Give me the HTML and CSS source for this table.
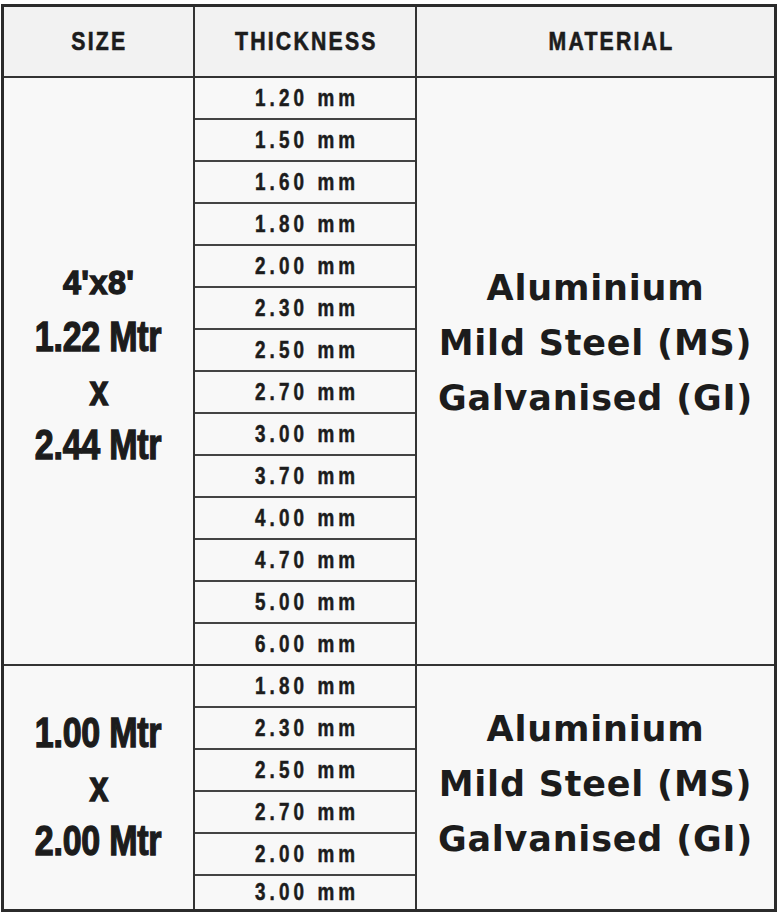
FILE: index.html
```html
<!DOCTYPE html>
<html lang="en">
<head>
<meta charset="utf-8">
<title>Sheet Sizes</title>
<link rel="stylesheet" href="styles.css">
</head>
<body>
<div class="sheet">
  <div class="head">
    <div class="h h-size"><span class="ht">SIZE</span></div>
    <div class="h h-thick"><span class="ht">THICKNESS</span></div>
    <div class="h h-mat"><span class="ht">MATERIAL</span></div>
  </div>
  <div class="section s1">
    <div class="size">
      <div class="sz sz-small">4'x8'</div>
      <div class="sz">1.22 Mtr</div>
      <div class="sz">x</div>
      <div class="sz">2.44 Mtr</div>
    </div>
    <div class="thick">
      <div class="row"><span class="val">1.20 mm</span></div>
      <div class="row"><span class="val">1.50 mm</span></div>
      <div class="row"><span class="val">1.60 mm</span></div>
      <div class="row"><span class="val">1.80 mm</span></div>
      <div class="row"><span class="val">2.00 mm</span></div>
      <div class="row"><span class="val">2.30 mm</span></div>
      <div class="row"><span class="val">2.50 mm</span></div>
      <div class="row"><span class="val">2.70 mm</span></div>
      <div class="row"><span class="val">3.00 mm</span></div>
      <div class="row"><span class="val">3.70 mm</span></div>
      <div class="row"><span class="val">4.00 mm</span></div>
      <div class="row"><span class="val">4.70 mm</span></div>
      <div class="row"><span class="val">5.00 mm</span></div>
      <div class="row"><span class="val">6.00 mm</span></div>
    </div>
    <div class="mat">
      <div class="m">Aluminium</div>
      <div class="m">Mild Steel (MS)</div>
      <div class="m">Galvanised (GI)</div>
    </div>
  </div>
  <div class="section s2">
    <div class="size">
      <div class="sz">1.00 Mtr</div>
      <div class="sz">x</div>
      <div class="sz">2.00 Mtr</div>
    </div>
    <div class="thick">
      <div class="row"><span class="val">1.80 mm</span></div>
      <div class="row"><span class="val">2.30 mm</span></div>
      <div class="row"><span class="val">2.50 mm</span></div>
      <div class="row"><span class="val">2.70 mm</span></div>
      <div class="row"><span class="val">2.00 mm</span></div>
      <div class="row"><span class="val">3.00 mm</span></div>
    </div>
    <div class="mat">
      <div class="m">Aluminium</div>
      <div class="m">Mild Steel (MS)</div>
      <div class="m">Galvanised (GI)</div>
    </div>
  </div>
</div>
</body>
</html>
```
FILE: styles.css
```css
html, body {
  margin: 0;
  padding: 0;
  background: #ffffff;
}

.sheet {
  margin: 4px 0 0 1px;
  width: 776px;
  box-sizing: border-box;
  border: 3px solid #2b2b2b;
  background: #f8f8f8;
  color: #1c1c1c;
}

.head,
.section {
  display: grid;
  grid-template-columns: 191px 222px 357px;
  box-sizing: border-box;
}

.head {
  height: 71px;
  background: #f2f2f2;
  border-bottom: 2px solid #333333;
}

.h {
  display: flex;
  align-items: center;
  justify-content: center;
  border-right: 2px solid #333333;
  font-family: "Liberation Sans", Arial, sans-serif;
  font-weight: 700;
  font-size: 25px;
  letter-spacing: 2.6px;
  -webkit-text-stroke: 0.6px #1c1c1c;
}

.ht {
  display: inline-block;
  transform: scaleX(0.85);
  padding-left: 2.6px;
  white-space: nowrap;
}

.h-mat {
  border-right: none;
  padding-left: 30px;
}

.s1 {
  height: 588px;
  border-bottom: 2px solid #333333;
}

.s2 {
  height: 243px;
}

.size {
  border-right: 2px solid #333333;
  display: flex;
  flex-direction: column;
  justify-content: center;
  align-items: center;
  font-family: "Liberation Sans", Arial, sans-serif;
  font-weight: 700;
  font-size: 43px;
  letter-spacing: -0.3px;
  -webkit-text-stroke: 1.4px #1c1c1c;
}

.s1 .size {
  padding-bottom: 16px;
}

.s2 .size {
  padding-bottom: 4px;
}

.sz {
  line-height: 54px;
  white-space: nowrap;
  transform: scaleX(0.79);
}

.sz-small {
  font-size: 34px;
  letter-spacing: 0.5px;
  transform: scaleX(0.95);
}

.thick {
  border-right: 2px solid #333333;
  display: flex;
  flex-direction: column;
}

.row {
  height: 42px;
  flex: none;
  box-sizing: border-box;
  border-bottom: 2px solid #444444;
  display: flex;
  align-items: center;
  justify-content: center;
  font-family: "Liberation Sans", Arial, sans-serif;
  font-weight: 700;
  font-size: 23px;
  letter-spacing: 5px;
  -webkit-text-stroke: 0.5px #1c1c1c;
}

.val {
  display: inline-block;
  transform: scaleX(0.82);
  padding-left: 5px;
  white-space: nowrap;
}

.row:last-child {
  border-bottom: none;
  flex: 1;
}

.mat {
  display: flex;
  flex-direction: column;
  justify-content: center;
  align-items: center;
  font-family: "DejaVu Sans", sans-serif;
  font-weight: 700;
  font-size: 35px;
  letter-spacing: 0.8px;
}

.s1 .mat {
  padding-bottom: 55px;
}

.s2 .mat {
  padding-bottom: 6px;
}

.m {
  line-height: 55px;
  white-space: nowrap;
}
```
